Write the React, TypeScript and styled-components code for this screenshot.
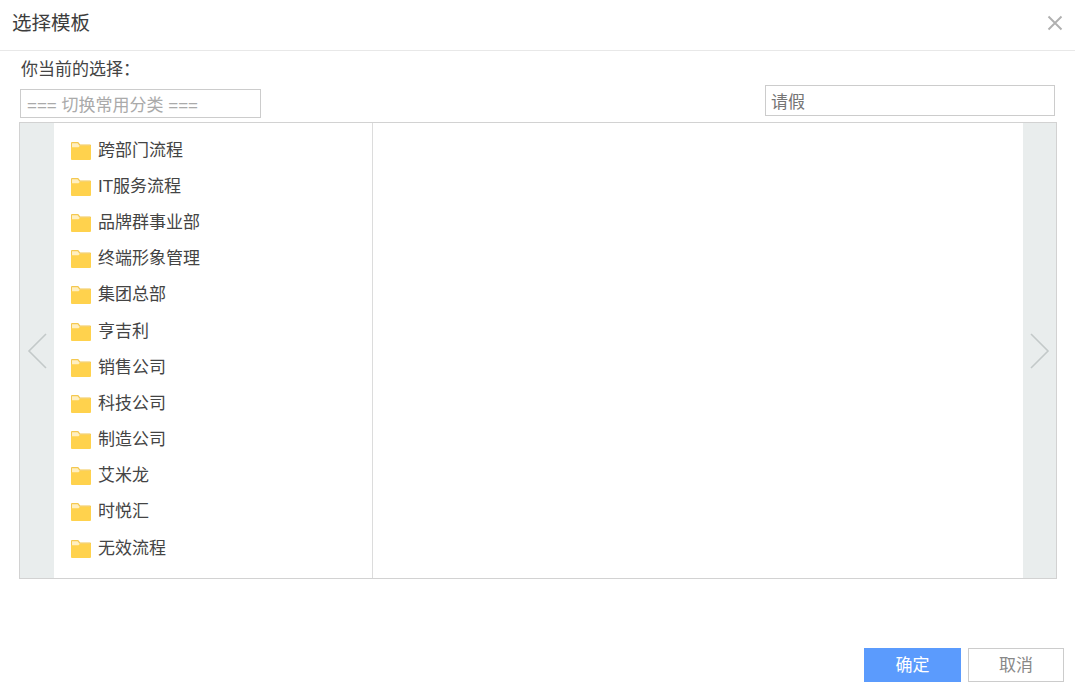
import React from 'react';
import styled, { createGlobalStyle } from 'styled-components';

const GlobalStyle = createGlobalStyle`
  html, body {
    margin: 0;
    padding: 0;
    background: #fff;
  }
  body {
    font-family: "Liberation Sans", "Noto Sans CJK SC", sans-serif;
    color: #444;
  }
  * {
    box-sizing: border-box;
  }
`;

const Dialog = styled.div`
  width: 1075px;
  height: 689px;
  display: flex;
  flex-direction: column;
  overflow: hidden;
`;

const Header = styled.header`
  height: 51px;
  flex: none;
  display: flex;
  align-items: center;
  justify-content: space-between;
  padding: 0 12px 5px 12px;
  border-bottom: 1px solid #e8e8e8;
`;

const Title = styled.h1`
  margin: 0;
  font-size: 19.5px;
  font-weight: 400;
  line-height: 24px;
  color: #3d3d3d;
`;

const CloseButton = styled.button`
  width: 16px;
  height: 16px;
  padding: 0;
  margin-top: 1px;
  border: 0;
  background: none;
  display: block;
`;

const Body = styled.div`
  flex: 1;
  padding: 5px 18px 0 19px;
`;

const Toolbar = styled.div`
  height: 66px;
  display: flex;
  justify-content: space-between;
  align-items: flex-start;
`;

const ToolbarLeft = styled.div`
  display: flex;
  flex-direction: column;
  padding-left: 1px;
`;

const CurrentLabel = styled.div`
  font-size: 17px;
  line-height: 24px;
  height: 33px;
  padding: 2px 0 0 1px;
  color: #444;
`;

const CategorySelect = styled.div`
  width: 241px;
  height: 29px;
  border: 1px solid #ccc;
  padding: 1px 0 0 6px;
  font-size: 17px;
  line-height: 29px;
  color: #aaa;
  white-space: pre;
`;

const SearchInput = styled.input`
  width: 290px;
  height: 31px;
  margin: 29px 2px 0 0;
  border: 1px solid #ccc;
  padding: 0 5px;
  font-family: inherit;
  font-size: 17px;
  color: #757575;
  outline: none;
  background: #fff;
`;

const Panel = styled.div`
  width: 1038px;
  height: 457px;
  border: 1px solid #d2d2d2;
  display: flex;
`;

const Pager = styled.div<{ $width: number }>`
  width: ${(p) => p.$width}px;
  flex: none;
  background: #e9eded;
  display: flex;
  align-items: center;
  justify-content: center;
`;

const TreeColumn = styled.ul`
  width: 319px;
  flex: none;
  margin: 0;
  padding: 7px 0 0 17px;
  list-style: none;
  border-right: 1px solid #dcdcdc;
`;

const TreeRow = styled.li`
  height: 36.2px;
  display: flex;
  align-items: center;
  gap: 7px;
  font-size: 17px;
  color: #444;
`;

const FolderSvg = styled.svg`
  flex: none;
  margin-top: 5px;
`;

const FileColumn = styled.div`
  flex: 1;
`;

const Footer = styled.footer`
  height: 41px;
  flex: none;
  display: flex;
  justify-content: flex-end;
  align-items: flex-start;
  gap: 7px;
  padding-right: 11px;
`;

const ActionButton = styled.button<{ $primary?: boolean }>`
  width: ${(p) => (p.$primary ? '97px' : '96px')};
  height: 34px;
  padding: 0 0 3px;
  font-family: inherit;
  font-size: 17px;
  border: 1px solid ${(p) => (p.$primary ? '#5b9bfd' : '#ccc')};
  background: ${(p) => (p.$primary ? '#5b9bfd' : '#fff')};
  color: ${(p) => (p.$primary ? '#fff' : '#888')};
`;

const FolderIcon = () => (
  <FolderSvg width="20" height="18" viewBox="0 0 20 18">
    <path d="M1 0h6.2l2 2.5H19a1 1 0 0 1 1 1V7H0V1a1 1 0 0 1 1-1z" fill="#f4c850" />
    <path d="M1 1.3h5.6l2 2.5H19V7H1z" fill="#ffefc0" />
    <path d="M0 5.2h7.5l1.2-1.2H20V17a1 1 0 0 1-1 1H1a1 1 0 0 1-1-1z" fill="#ffd24d" />
  </FolderSvg>
);

const Chevron = ({ dir }: { dir: 'left' | 'right' }) => (
  <svg width="20" height="36" viewBox="0 0 20 36" fill="none" stroke="#c3c9c9" strokeWidth="1.6">
    <path d={dir === 'left' ? 'M19 1L2 18l17 17' : 'M1 1l17 17L1 35'} />
  </svg>
);

const folders = [
  '跨部门流程',
  'IT服务流程',
  '品牌群事业部',
  '终端形象管理',
  '集团总部',
  '亨吉利',
  '销售公司',
  '科技公司',
  '制造公司',
  '艾米龙',
  '时悦汇',
  '无效流程',
];

const App: React.FC = () => {
  return (
    <Dialog>
      <GlobalStyle />
      <Header>
        <Title>选择模板</Title>
        <CloseButton aria-label="关闭">
          <svg width="16" height="16" viewBox="0 0 16 16" stroke="#b0b0b0" strokeWidth="1.9" fill="none">
            <path d="M1.5 1.5l13 13M14.5 1.5l-13 13" />
          </svg>
        </CloseButton>
      </Header>
      <Body>
        <Toolbar>
          <ToolbarLeft>
            <CurrentLabel>你当前的选择：</CurrentLabel>
            <CategorySelect>=== 切换常用分类 ===</CategorySelect>
          </ToolbarLeft>
          <SearchInput defaultValue="请假" />
        </Toolbar>
        <Panel>
          <Pager $width={34}>
            <Chevron dir="left" />
          </Pager>
          <TreeColumn>
            {folders.map((name) => (
              <TreeRow key={name}>
                <FolderIcon />
                {name}
              </TreeRow>
            ))}
          </TreeColumn>
          <FileColumn />
          <Pager $width={33}>
            <Chevron dir="right" />
          </Pager>
        </Panel>
      </Body>
      <Footer>
        <ActionButton $primary>确定</ActionButton>
        <ActionButton>取消</ActionButton>
      </Footer>
    </Dialog>
  );
};

export default App;
